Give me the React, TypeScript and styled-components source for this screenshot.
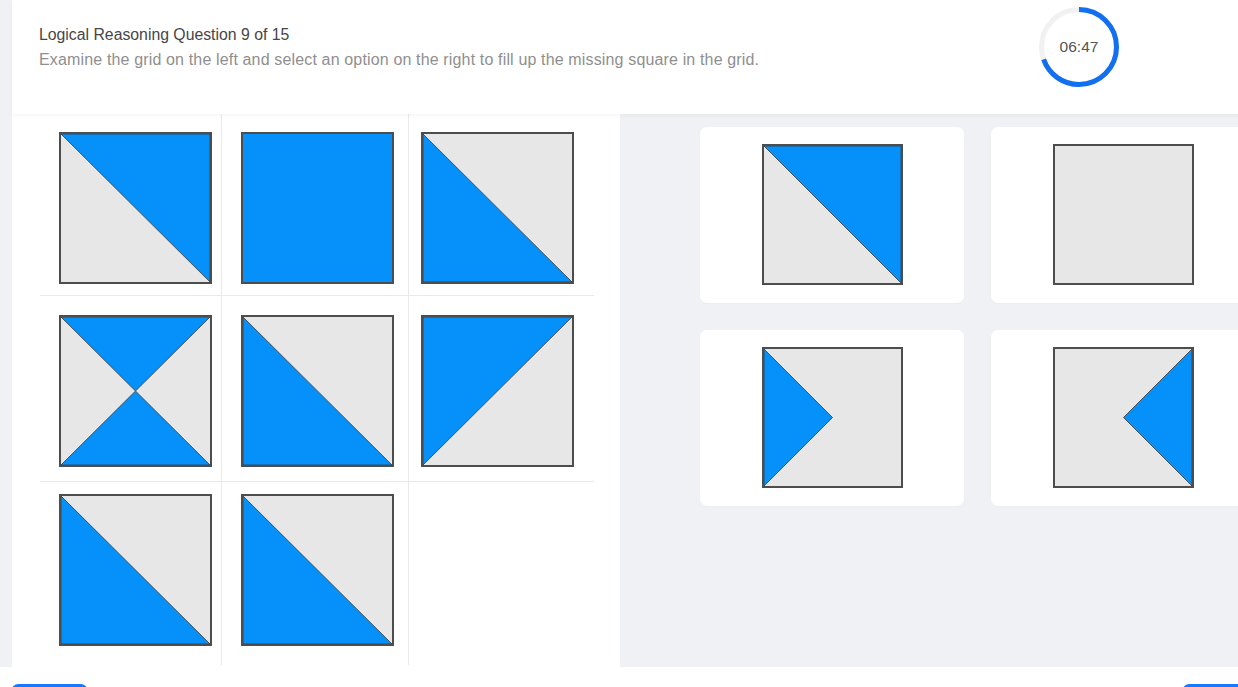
import React from "react";
import styled, { createGlobalStyle } from "styled-components";

const GlobalStyle = createGlobalStyle`
  html, body {
    margin: 0;
    padding: 0;
  }
  body {
    background: #f0f1f5;
    font-family: "Liberation Sans", Arial, sans-serif;
    overflow: hidden;
  }
`;

const BLUE = "#0590fa";
const GRAY = "#e7e7e7";

const Page = styled.div`
  width: 1270px;
  height: 687px;
  overflow: hidden;
  display: flex;
  flex-direction: column;
  background: #f0f1f5;
`;

const Main = styled.div`
  display: flex;
  flex-direction: column;
  padding-left: 12px;
  height: 667px;
  box-sizing: border-box;
`;

const Header = styled.header`
  height: 114px;
  flex: none;
  background: #ffffff;
  display: flex;
  align-items: flex-start;
  padding: 7px 151px 0 27px;
  box-sizing: border-box;
  box-shadow: 0 2px 5px rgba(0, 0, 0, 0.04);
  position: relative;
  z-index: 1;
`;

const HeaderText = styled.div`
  flex: 1;
  margin-top: 18px;
`;

const Title = styled.div`
  font-size: 15.8px;
  line-height: 20px;
  color: #464646;
`;

const Subtitle = styled.div`
  margin-top: 5px;
  font-size: 16px;
  line-height: 20px;
  color: #8f8f8f;
  letter-spacing: 0.15px;
`;

const TimerWrap = styled.div`
  width: 80px;
  height: 80px;
  position: relative;
  flex: none;
`;

const TimerLabel = styled.div`
  position: absolute;
  inset: 0;
  display: flex;
  align-items: center;
  justify-content: center;
  font-size: 15.5px;
  color: #555555;
`;

const Body = styled.div`
  flex: 1;
  display: flex;
  min-height: 0;
`;

const GridPanel = styled.section`
  width: 608px;
  flex: none;
  background: #ffffff;
  padding-left: 28px;
  box-sizing: border-box;
`;

const Grid = styled.div`
  display: grid;
  grid-template-columns: 182px 187px 185px;
  grid-template-rows: 182px 186px 183px;
`;

const Cell = styled.div<{ $right: boolean; $bottom: boolean; $padX: number; $padY: number }>`
  display: flex;
  align-items: flex-start;
  justify-content: flex-start;
  box-sizing: border-box;
  padding: ${(p) => p.$padY}px 0 0 ${(p) => p.$padX}px;
  border-right: ${(p) => (p.$right ? "1px solid #e9e9e9" : "none")};
  border-bottom: ${(p) => (p.$bottom ? "1px solid #e9e9e9" : "none")};
`;

const Tile = styled.div<{ $w: number; $h: number }>`
  width: ${(p) => p.$w}px;
  height: ${(p) => p.$h}px;
  border: 2px solid #4d4d4d;
  box-sizing: border-box;
  background: ${GRAY};
  display: flex;

  svg {
    width: 100%;
    height: 100%;
    display: block;
  }
`;

const Options = styled.section`
  flex: 1;
  display: grid;
  grid-template-columns: 264px 264px;
  grid-auto-rows: 176px;
  gap: 27px;
  align-content: start;
  padding: 13px 0 0 80px;
`;

const OptionCard = styled.button`
  background: #ffffff;
  border: none;
  border-radius: 7px;
  display: flex;
  align-items: center;
  justify-content: center;
  padding: 0 0 2px 0;
  cursor: pointer;
  box-shadow: 0 1px 2px rgba(0, 0, 0, 0.02);
`;

const Footer = styled.footer`
  height: 20px;
  flex: none;
  background: #ffffff;
  display: flex;
  justify-content: space-between;
  padding: 17px 12px 0;
  box-sizing: border-box;
  overflow: hidden;
`;

const NavButton = styled.button`
  width: 75px;
  height: 36px;
  border: none;
  border-radius: 6px;
  background: #1677ff;
  flex: none;
`;

type Pattern = number[][][];

// Polygons in a 100x100 box
const TR: number[][] = [[0, 0], [100, 0], [100, 100]];
const BL: number[][] = [[0, 0], [0, 100], [100, 100]];
const TL: number[][] = [[0, 0], [100, 0], [0, 100]];
const FULL: number[][] = [[0, 0], [100, 0], [100, 100], [0, 100]];
const TOP: number[][] = [[0, 0], [100, 0], [50, 50]];
const BOTTOM: number[][] = [[0, 100], [100, 100], [50, 50]];
const LEFT: number[][] = [[0, 0], [0, 100], [50, 50]];
const RIGHT: number[][] = [[100, 0], [100, 100], [50, 50]];

const Shape: React.FC<{ polys: Pattern; w: number; h: number }> = ({ polys, w, h }) => (
  <Tile $w={w} $h={h}>
    <svg viewBox="0 0 100 100" preserveAspectRatio="none">
      {polys.map((p, i) => (
        <polygon
          key={i}
          points={p.map((pt) => pt.join(",")).join(" ")}
          fill={BLUE}
          stroke={p === FULL ? "none" : "#3a3a3a"}
          strokeWidth={0.8}
          vectorEffect="non-scaling-stroke"
          strokeLinejoin="round"
        />
      ))}
    </svg>
  </Tile>
);

const gridItems: (Pattern | null)[] = [
  [TR],
  [FULL],
  [BL],
  [TOP, BOTTOM],
  [BL],
  [TL],
  [BL],
  [BL],
  null,
];

const COL_PAD = [19, 19, 12];
const ROW_PAD = [18, 19, 12];

const options: Pattern[] = [[TR], [], [LEFT], [RIGHT]];

const Timer: React.FC<{ remaining: number; total: number; label: string }> = ({
  remaining,
  total,
  label,
}) => {
  const r = 37.5;
  const c = 2 * Math.PI * r;
  const frac = remaining / total;
  return (
    <TimerWrap>
      <svg width="80" height="80" viewBox="0 0 80 80">
        <circle cx="40" cy="40" r={r} fill="none" stroke="#f1f1f1" strokeWidth="5" />
        <circle
          cx="40"
          cy="40"
          r={r}
          fill="none"
          stroke="#126ff0"
          strokeWidth="5"
          strokeDasharray={`${c * frac} ${c}`}
          transform="rotate(-90 40 40)"
        />
      </svg>
      <TimerLabel>{label}</TimerLabel>
    </TimerWrap>
  );
};

export default function App() {
  return (
    <>
      <GlobalStyle />
      <Page>
        <Main>
          <Header>
            <HeaderText>
              <Title>Logical Reasoning Question 9 of 15</Title>
              <Subtitle>
                Examine the grid on the left and select an option on the right to fill up the missing
                square in the grid.
              </Subtitle>
            </HeaderText>
            <Timer remaining={417} total={600} label="06:47" />
          </Header>
          <Body>
            <GridPanel>
              <Grid>
                {gridItems.map((item, i) => (
                  <Cell
                    key={i}
                    $right={i % 3 < 2}
                    $bottom={i < 6}
                    $padX={COL_PAD[i % 3]}
                    $padY={ROW_PAD[Math.floor(i / 3)]}
                  >
                    {item && <Shape polys={item} w={153} h={152} />}
                  </Cell>
                ))}
              </Grid>
            </GridPanel>
            <Options>
              {options.map((o, i) => (
                <OptionCard key={i}>
                  <Shape polys={o} w={141} h={141} />
                </OptionCard>
              ))}
            </Options>
          </Body>
        </Main>
        <Footer>
          <NavButton />
          <NavButton />
        </Footer>
      </Page>
    </>
  );
}
